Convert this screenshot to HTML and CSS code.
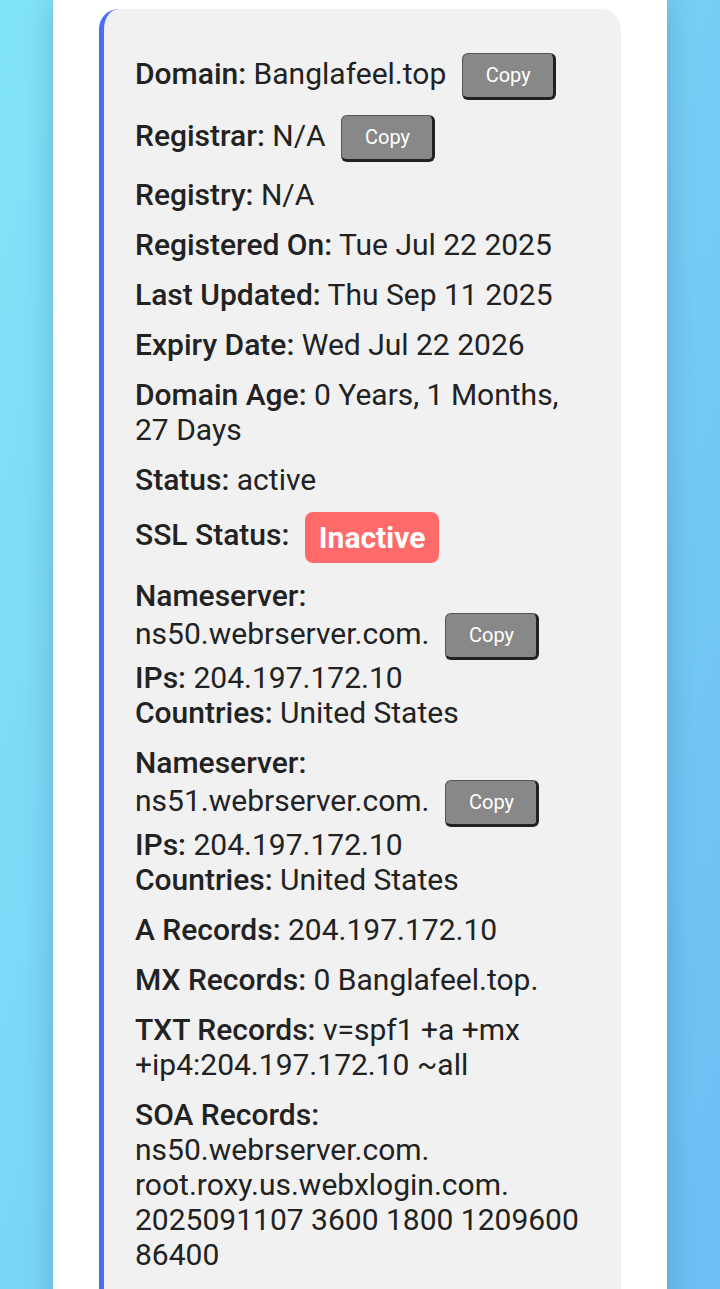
FILE: index.html
```html
<!DOCTYPE html>
<html lang="en">
<head>
<meta charset="UTF-8" />
<meta name="viewport" content="width=device-width, initial-scale=1" />
<title>Domain Lookup</title>
<link rel="stylesheet" href="styles.css">
</head>
<body>

<div class="container">
  <div class="result">
    <p><strong>Domain:</strong> Banglafeel.top <button class="copy-btn">Copy</button></p>
    <p><strong>Registrar:</strong> N/A <button class="copy-btn">Copy</button></p>
    <p><strong>Registry:</strong> N/A</p>
    <p><strong>Registered On:</strong> Tue Jul 22 2025</p>
    <p><strong>Last Updated:</strong> Thu Sep 11 2025</p>
    <p><strong>Expiry Date:</strong> Wed Jul 22 2026</p>
    <p><strong>Domain Age:</strong> 0 Years, 1 Months, 27 Days</p>
    <p><strong>Status:</strong> active</p>
    <p><strong>SSL Status:</strong> <span class="badge inactive">Inactive</span></p>
    <p>
      <strong>Nameserver:</strong> ns50.webrserver.com. <button class="copy-btn">Copy</button><br>
      <strong>IPs:</strong> 204.197.172.10<br>
      <strong>Countries:</strong> United States
    </p>
    <p>
      <strong>Nameserver:</strong> ns51.webrserver.com. <button class="copy-btn">Copy</button><br>
      <strong>IPs:</strong> 204.197.172.10<br>
      <strong>Countries:</strong> United States
    </p>
    <p><strong>A Records:</strong> 204.197.172.10</p>
    <p><strong>MX Records:</strong> 0 Banglafeel.top.</p>
    <p><strong>TXT Records:</strong> v=spf1 +a +mx +ip4:204.197.172.10 ~all</p>
    <p><strong>SOA Records:</strong> ns50.webrserver.com. root.roxy.us.webxlogin.com. 2025091107 3600 1800 1209600 86400</p>
  </div>
</div>

</body>
</html>
```

FILE: styles.css
```css
/* Page background */
body {
  font-family: Roboto, 'Noto Sans', sans-serif;
  margin: 0;
  min-height: 100vh;
  background: linear-gradient(110deg, #82e4f9 0%, #78d2f6 50%, #6cbdf3 100%);
  color: #222;
  padding: 0 53px;
}

.container {
  background: #fff;
  box-shadow: 0 0 28px rgba(0, 40, 80, 0.22);
  padding: 9px 46px 40px;
  min-height: 100vh;
  box-sizing: border-box;
}

.result {
  background: #f1f1f1;
  border-left: 5px solid #4a6cf7;
  border-radius: 20px;
  padding: 29px 30px 30px 31px;
  font-size: 30px;
  line-height: 35px;
}

.result p {
  margin: 15px 0;
}

.result strong {
  font-weight: 500;
}

.copy-btn {
  font-family: Roboto, sans-serif;
  font-size: 20px;
  line-height: 23px;
  color: #fff;
  background: #888;
  border-style: solid;
  border-color: #555 #222 #222 #555;
  border-width: 1px 3px 3px 1px;
  border-radius: 6px;
  padding: 10px 22px 10px 23px;
  margin-left: 8px;
  vertical-align: middle;
  cursor: pointer;
}

.badge {
  display: inline-block;
  font-weight: 700;
  color: #fff;
  padding: 8px 14px;
  border-radius: 8px;
  margin-left: 8px;
  vertical-align: middle;
}

.badge.inactive {
  background: #ff6b6b;
}
```
